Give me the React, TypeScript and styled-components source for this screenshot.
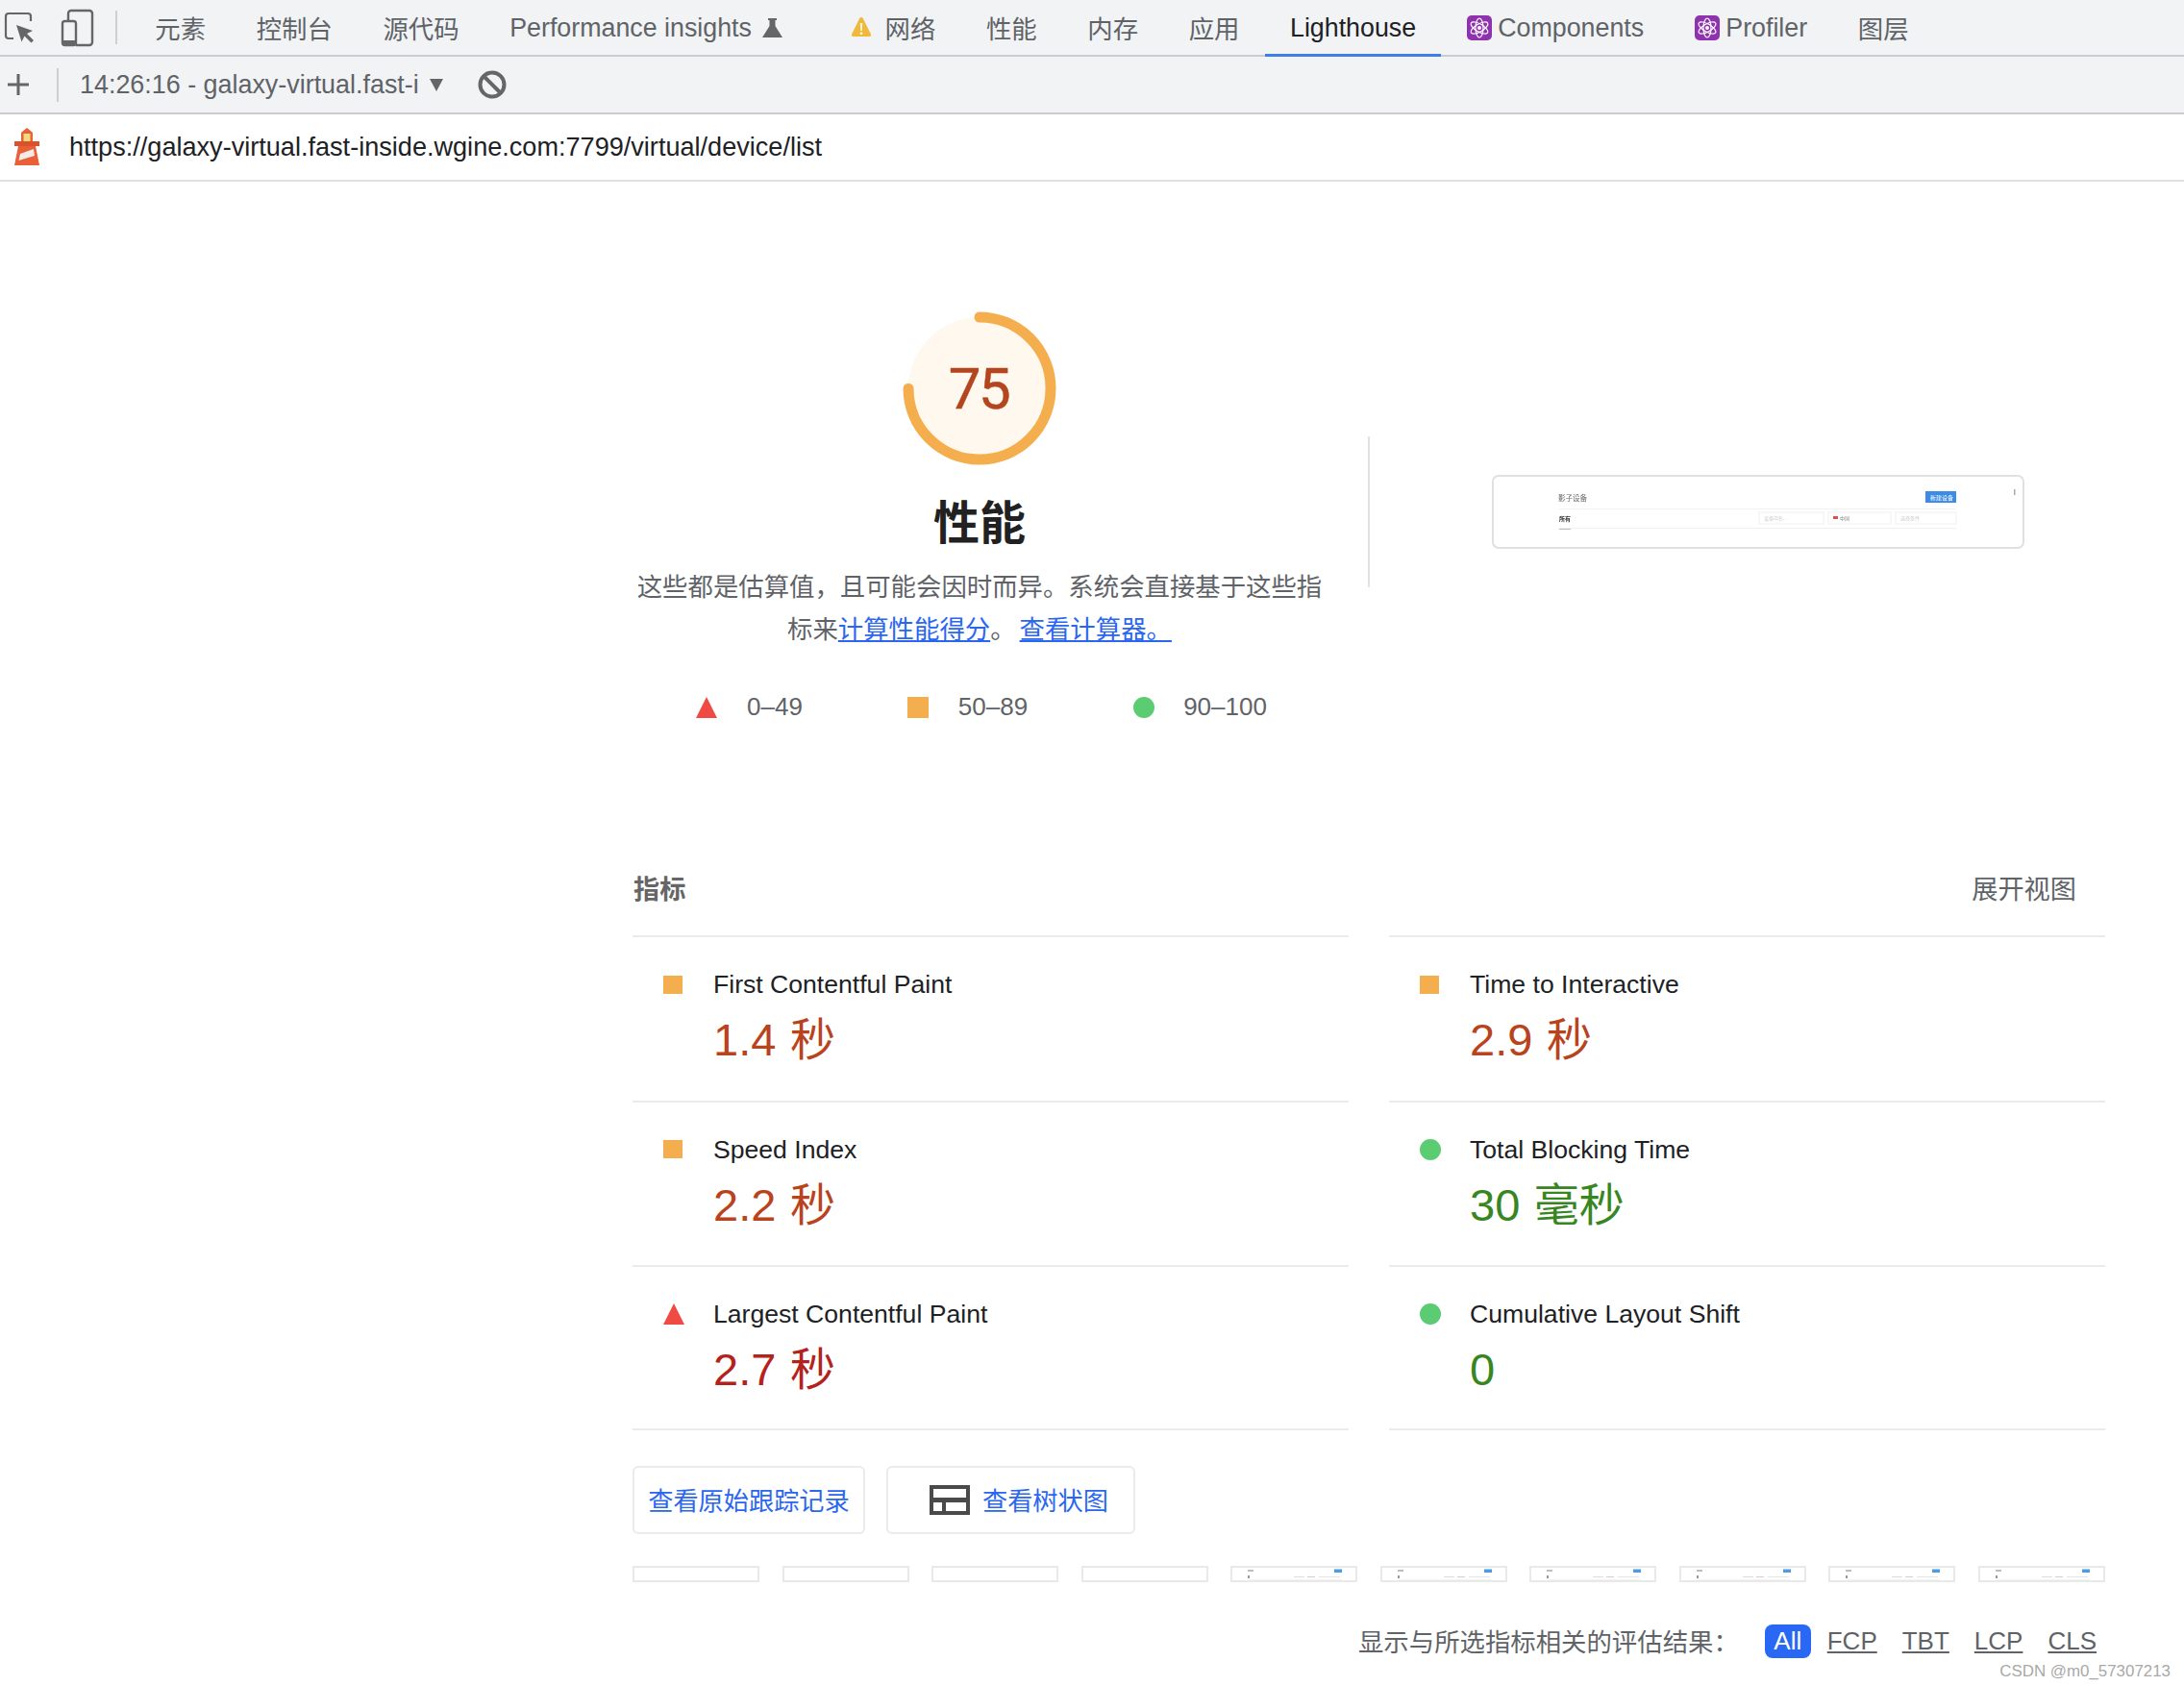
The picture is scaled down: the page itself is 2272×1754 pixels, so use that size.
import React from 'react';
import styled, { createGlobalStyle } from 'styled-components';

const GlobalStyle = createGlobalStyle`
  html, body {
    margin: 0;
    padding: 0;
    background: #fff;
  }
  body {
    font-family: "Liberation Sans", "Noto Sans CJK SC", sans-serif;
  }
`;

const Page = styled.div`
  position: relative;
  width: 2272px;
  height: 1754px;
  overflow: hidden;
  background: #fff;
`;

/* devtools chrome */
const TabBar = styled.div`
  display: flex;
  align-items: stretch;
  height: 57px;
  background: #f1f3f5;
  border-bottom: 2px solid #cbcbd0;
`;

const ToolIcons = styled.div`
  display: flex;
  align-items: center;
  gap: 22px;
  padding-left: 4px;
  margin-right: 13px;
`;

const VSep = styled.div<{ $h: number }>`
  width: 2px;
  height: ${p => p.$h}px;
  background: #cfcfd2;
`;

const Tab = styled.div<{ $active?: boolean; $latin?: boolean }>`
  display: flex;
  align-items: center;
  padding: ${p => (p.$latin ? '2px' : '0')} 26.3px 0;
  height: 59px;
  box-sizing: border-box;
  font-size: ${p => (p.$latin ? '26.8px' : '26.4px')};
  white-space: nowrap;
  color: ${p => (p.$active ? '#202124' : '#5f6368')};
  border-bottom: 3px solid ${p => (p.$active ? '#3f7de8' : 'transparent')};
`;

const FlaskIcon = styled.svg`
  margin-left: 11px;
  margin-right: 19px;
`;

const TabIcon = styled.svg`
  margin-right: 6.5px;
  flex: none;
`;

const WarnIcon = styled.svg`
  margin-right: 14px;
  margin-left: -1px;
  flex: none;
`;

const ReportBar = styled.div`
  display: flex;
  align-items: center;
  height: 58px;
  background: #f1f3f5;
  border-bottom: 2px solid #cbcbd0;
`;

const PlusIcon = styled.svg`
  margin-left: 8px;
  margin-right: 29px;
`;

const ReportName = styled.span`
  margin-left: 22px;
  font-size: 26.9px;
  color: #5f6368;
  white-space: nowrap;
`;

const Caret = styled.svg`
  margin-left: 11px;
  margin-right: 36px;
`;

const UrlBar = styled.div`
  display: flex;
  align-items: center;
  height: 68px;
  padding-left: 15px;
  border-bottom: 2px solid #e0e0e0;
`;

const UrlText = styled.span`
  margin-left: 31px;
  font-size: 27.1px;
  color: #202124;
  white-space: nowrap;
`;

/* score header */
const ScoreHeader = styled.div`
  display: flex;
  align-items: flex-start;
  height: 706px;
  padding-left: 657px;
`;

const ScoreColumn = styled.div`
  width: 724px;
  padding-top: 135px;
  display: flex;
  flex-direction: column;
  align-items: center;
`;

const Gauge = styled.div`
  display: grid;
  place-items: center;
  width: 160px;
  height: 160px;
  & > * {
    grid-area: 1 / 1;
  }
`;

const GaugeValue = styled.span`
  padding: 2px 2px 0 0;
  font-family: Roboto, "Liberation Sans", sans-serif;
  font-size: 60px;
  letter-spacing: -2.5px;
  line-height: 1;
  color: #b3451f;
  -webkit-text-stroke: 0.5px #b3451f;
`;

const CategoryTitle = styled.h1`
  margin: 33px 0 0;
  font-size: 48px;
  line-height: 56px;
  font-weight: 700;
  color: #212121;
`;

const Description = styled.p`
  margin: 16px 0 0;
  width: 724px;
  font-size: 26.4px;
  line-height: 44px;
  text-align: center;
  color: #5f6368;
`;

const DescriptionLine = styled.span`
  display: block;
  white-space: nowrap;
`;

const InlineLink = styled.a`
  color: #2a66ef;
  text-decoration: underline;
`;

const FullStop = styled.span`
  margin-right: 4px;
`;

const Legend = styled.div`
  display: flex;
  align-items: center;
  align-self: flex-start;
  margin: 43px 0 0 67px;
  font-size: 26px;
  color: #5f6368;
`;

const LegendItem = styled.div<{ $gap: number; $after?: number }>`
  display: flex;
  align-items: center;
  gap: ${p => p.$gap}px;
  margin-right: ${p => p.$after ?? 0}px;
`;

const SquareMark = styled.span<{ $size?: number }>`
  display: block;
  flex: none;
  width: ${p => p.$size ?? 22}px;
  height: ${p => (p.$size ? p.$size - 1 : 22)}px;
  background: #f4ae4e;
`;

const CircleMark = styled.span<{ $size?: number }>`
  display: block;
  flex: none;
  width: ${p => p.$size ?? 22}px;
  height: ${p => p.$size ?? 22}px;
  border-radius: 50%;
  background: #5bcc72;
`;

const TriangleMark = styled.span<{ $size?: number }>`
  display: block;
  flex: none;
  width: 0;
  height: 0;
  border-left: ${p => (p.$size ?? 22) / 2}px solid transparent;
  border-right: ${p => (p.$size ?? 22) / 2}px solid transparent;
  border-bottom: ${p => p.$size ?? 22}px solid #ef4a43;
`;

const HeaderRule = styled.div`
  flex: none;
  width: 2px;
  height: 157px;
  margin: 265px 0 0 42px;
  background: #e2e2e2;
`;

const Screenshot = styled.svg`
  flex: none;
  margin: 305px 0 0 127px;
  filter: blur(0.45px);
`;

/* metrics */
const Report = styled.div`
  padding: 0 82px 0 658px;
`;

const MetricsHead = styled.div`
  display: flex;
  justify-content: space-between;
  align-items: center;
  height: 78px;
  box-sizing: border-box;
  padding: 0 30px 22px 1px;
  font-size: 27.2px;
  color: #5f6368;
`;

const MetricsTitle = styled.span`
  font-weight: 700;
  color: #666;
`;

const MetricsGrid = styled.div`
  display: grid;
  grid-template-columns: 745px 745px;
  column-gap: 42px;
`;

const Metric = styled.div`
  display: grid;
  grid-template-columns: 84px 1fr;
  grid-template-rows: 46px auto;
  padding-top: 26px;
  height: 143.5px;
  border-top: 2px solid #ebebeb;
  &:nth-last-child(-n + 2) {
    height: 141.5px;
    border-bottom: 2px solid #ebebeb;
  }
`;

const MarkSlot = styled.div`
  display: flex;
  align-items: center;
  padding-left: 31.5px;
`;

const MetricLabel = styled.div`
  font-size: 26.6px;
  line-height: 46px;
  color: #202124;
`;

const MetricValue = styled.div<{ $tone: string }>`
  grid-column: 2;
  margin-top: 7px;
  font-size: 47px;
  line-height: 56px;
  word-spacing: 1.5px;
  color: ${p => p.$tone};
`;

const Buttons = styled.div`
  display: flex;
  gap: 22px;
  margin-top: 37px;
`;

const OutlineButton = styled.div<{ $w: number; $start?: number }>`
  display: flex;
  align-items: center;
  justify-content: ${p => (p.$start ? 'flex-start' : 'center')};
  gap: 13px;
  width: ${p => p.$w}px;
  height: 71px;
  box-sizing: border-box;
  padding-left: ${p => p.$start ?? 0}px;
  border: 2px solid #ebebeb;
  border-radius: 6px;
  font-size: 26.2px;
  color: #2a66ef;
`;

const Filmstrip = styled.div`
  display: grid;
  grid-template-columns: repeat(10, 132px);
  justify-content: space-between;
  margin-top: 33px;
`;

const Frame = styled.div`
  width: 132px;
  height: 17px;
  box-sizing: border-box;
  border: 2px solid #e9e9e9;
  overflow: hidden;
  svg {
    display: block;
  }
`;

const FilterRow = styled.div`
  display: flex;
  align-items: center;
  justify-content: flex-end;
  margin-top: 44px;
  height: 35px;
  padding-right: 9px;
  font-size: 26px;
  color: #5f6368;
`;

const FilterLabel = styled.span`
  margin-right: 27px;
  padding-bottom: 2px;
  font-size: 26.4px;
`;

const FilterChip = styled.span<{ $active?: boolean }>`
  display: flex;
  align-items: center;
  justify-content: center;
  height: 35px;
  padding: 0 ${p => (p.$active ? '9.5px' : '0')};
  margin-right: ${p => (p.$active ? '17px' : '26px')};
  border-radius: 8px;
  background: ${p => (p.$active ? '#2968f5' : 'transparent')};
  color: ${p => (p.$active ? '#fff' : '#5f6368')};
  text-decoration: ${p => (p.$active ? 'none' : 'underline')};
  &:last-child {
    margin-right: 0;
  }
`;

const Watermark = styled.div`
  position: absolute;
  right: 14px;
  bottom: 5px;
  font-size: 16.9px;
  color: #a9a9a9;
`;

const ReactIcon = () => (
  <TabIcon width="26" height="26" viewBox="0 0 26 26">
    <rect width="26" height="26" rx="5" fill="#8e33ad" />
    <g fill="none" stroke="#fff" strokeWidth="1.2">
      <ellipse cx="13" cy="13" rx="4" ry="10" />
      <ellipse cx="13" cy="13" rx="4" ry="10" transform="rotate(60 13 13)" />
      <ellipse cx="13" cy="13" rx="4" ry="10" transform="rotate(-60 13 13)" />
    </g>
    <circle cx="13" cy="13" r="2" fill="#fff" />
  </TabIcon>
);

const MiniPage = () => (
  <svg width="128" height="13" viewBox="0 0 128 13">
    <rect x="16" y="2" width="6" height="2" fill="#bdbdbd" />
    <rect x="106" y="1.5" width="8" height="3.5" fill="#4d9be0" />
    <rect x="16" y="8" width="2" height="3" fill="#999" />
    <rect x="18" y="12" width="96" height="1" fill="#f3f3f3" />
    <rect x="64" y="9" width="11" height="1" fill="#ddd" />
    <rect x="78" y="9" width="8" height="1" fill="#e2c8c8" />
    <rect x="90" y="9" width="22" height="1" fill="#e4e4e4" />
  </svg>
);

const DevicePreview = () => (
  <Screenshot width="554" height="77" viewBox="0 0 554 77">
    <rect x="1" y="1" width="552" height="75" rx="6" fill="#fff" stroke="#e0e0e0" strokeWidth="2" />
    <text x="69" y="27" fontSize="7.5" fill="#666">影子设备</text>
    <rect x="451" y="17" width="32" height="12" fill="#3c8ce6" />
    <text x="456" y="25.5" fontSize="6" fill="#fff">新建设备</text>
    <rect x="543" y="15" width="1.5" height="6" fill="#aaa" />
    <rect x="70" y="35" width="413" height="1" fill="#f1f1f1" />
    <text x="70" y="48" fontSize="6" fontWeight="700" fill="#333">所有</text>
    <rect x="278" y="39" width="67" height="12" fill="#fff" stroke="#f0f0f0" />
    <text x="283" y="47" fontSize="5" fill="#ccc">设备ID名...</text>
    <rect x="350" y="39" width="65" height="12" fill="#fff" stroke="#f0f0f0" />
    <rect x="355" y="43" width="5" height="3" fill="#d9534f" />
    <text x="362" y="47" fontSize="5" fill="#888">中国</text>
    <rect x="420" y="39" width="63" height="12" fill="#fff" stroke="#f0f0f0" />
    <text x="425" y="47" fontSize="5" fill="#ccc">选择条件</text>
    <rect x="70" y="55" width="413" height="1" fill="#f1f1f1" />
    <rect x="70" y="56" width="12" height="1" fill="#bbb" />
  </Screenshot>
);

const metrics = [
  { label: 'First Contentful Paint', value: '1.4 秒', mark: 'square', tone: '#b9431c' },
  { label: 'Time to Interactive', value: '2.9 秒', mark: 'square', tone: '#b9431c' },
  { label: 'Speed Index', value: '2.2 秒', mark: 'square', tone: '#b9431c' },
  { label: 'Total Blocking Time', value: '30 毫秒', mark: 'circle', tone: '#38861f' },
  { label: 'Largest Contentful Paint', value: '2.7 秒', mark: 'triangle', tone: '#b3231c' },
  { label: 'Cumulative Layout Shift', value: '0', mark: 'circle', tone: '#38861f' },
];

const Mark = ({ kind }: { kind: string }) => {
  if (kind === 'square') return <SquareMark $size={20} />;
  if (kind === 'circle') return <CircleMark $size={22} />;
  return <TriangleMark $size={22} />;
};

export default function App() {
  return (
    <Page>
      <GlobalStyle />
      <TabBar>
        <ToolIcons>
          <svg width="36" height="36" viewBox="0 0 36 36">
            <path d="M10 29H5a3 3 0 0 1-3-3V6a3 3 0 0 1 3-3h20a3 3 0 0 1 3 3v5" fill="none" stroke="#666" strokeWidth="2.2" />
            <path d="M13 15l17 6-6 3 7 7-2.5 2.5-7-7-3 6z" fill="#666" />
          </svg>
          <svg width="36" height="40" viewBox="0 0 36 40">
            <path d="M9 12V5a3 3 0 0 1 3-3h19a3 3 0 0 1 3 3v30a3 3 0 0 1-3 3H17" fill="none" stroke="#666" strokeWidth="2.4" />
            <rect x="3" y="13" width="14" height="25" rx="2.5" fill="#f1f3f5" stroke="#666" strokeWidth="2.4" />
            <rect x="3" y="33" width="14" height="5" fill="#666" />
          </svg>
          <VSep $h={35} />
        </ToolIcons>
        <Tab>元素</Tab>
        <Tab>控制台</Tab>
        <Tab>源代码</Tab>
        <Tab $latin>
          Performance insights
          <FlaskIcon width="21" height="20" viewBox="0 0 21 20">
            <path d="M6 0h9v2h-1.5v6L21 20H0L7.5 8V2H6z" fill="#666" />
          </FlaskIcon>
        </Tab>
        <Tab>
          <WarnIcon width="22" height="22" viewBox="0 0 22 22">
            <path d="M11 1c1 0 1.6.6 2 1.4l8 16.4c.6 1.3 0 2.2-1.4 2.2H2.4C1 21 .4 20.100 1 18.800l8-16.400C9.400 1.600 10 1 11 1z" fill="#f0b93a" />
            <path d="M9.800 7h2.400l-.4 8h-1.600zM9.800 16.500h2.400v2.500H9.800z" fill="#fdf6e0" />
          </WarnIcon>
          网络
        </Tab>
        <Tab>性能</Tab>
        <Tab>内存</Tab>
        <Tab>应用</Tab>
        <Tab $active $latin>Lighthouse</Tab>
        <Tab $latin>
          <ReactIcon />
          Components
        </Tab>
        <Tab $latin>
          <ReactIcon />
          Profiler
        </Tab>
        <Tab>图层</Tab>
      </TabBar>

      <ReportBar>
        <PlusIcon width="22" height="22" viewBox="0 0 22 22">
          <path d="M0 11h22M11 0v22" stroke="#666" strokeWidth="3" />
        </PlusIcon>
        <VSep $h={35} />
        <ReportName>14:26:16 - galaxy-virtual.fast-i</ReportName>
        <Caret width="14" height="13" viewBox="0 0 14 13">
          <path d="M0 0h14L7 13z" fill="#666" />
        </Caret>
        <svg width="30" height="30" viewBox="0 0 30 30">
          <circle cx="15" cy="15" r="12.500" fill="none" stroke="#666" strokeWidth="4" />
          <path d="M6.500 6.500l17 17" stroke="#666" strokeWidth="4" />
        </svg>
      </ReportBar>

      <UrlBar>
        <svg width="26" height="40" viewBox="0 0 26 40">
          <path d="M13 0l6 5v9H7V5z" fill="#e9603a" />
          <rect x="9.500" y="6" width="7" height="8" fill="#f2dc7c" />
          <rect x="0" y="14" width="26" height="5" fill="#d9522c" />
          <path d="M4 19h18l4 20H0z" fill="#e85f38" />
          <path d="M6 27l14-5 1 7-16.500 5z" fill="#f5ece8" />
        </svg>
        <UrlText>https://galaxy-virtual.fast-inside.wgine.com:7799/virtual/device/list</UrlText>
      </UrlBar>

      <ScoreHeader>
        <ScoreColumn>
          <Gauge>
            <svg width="160" height="160" viewBox="0 0 160 160">
              <circle cx="80" cy="80" r="74" fill="#fff8ef" />
              <circle
                cx="80"
                cy="80"
                r="74"
                fill="none"
                stroke="#f4ae4e"
                strokeWidth="11"
                strokeLinecap="round"
                strokeDasharray="348 465"
                transform="rotate(-90 80 80)"
              />
            </svg>
            <GaugeValue>75</GaugeValue>
          </Gauge>
          <CategoryTitle>性能</CategoryTitle>
          <Description>
            <DescriptionLine>这些都是估算值，且可能会因时而异。系统会直接基于这些指</DescriptionLine>
            <DescriptionLine>
              标来<InlineLink>计算性能得分</InlineLink>
              <FullStop>。</FullStop>
              <InlineLink>查看计算器。</InlineLink>
            </DescriptionLine>
          </Description>
          <Legend>
            <LegendItem $gap={31} $after={109}>
              <TriangleMark />
              <span>0–49</span>
            </LegendItem>
            <LegendItem $gap={31} $after={110}>
              <SquareMark />
              <span>50–89</span>
            </LegendItem>
            <LegendItem $gap={30}>
              <CircleMark />
              <span>90–100</span>
            </LegendItem>
          </Legend>
        </ScoreColumn>
        <HeaderRule />
        <DevicePreview />
      </ScoreHeader>

      <Report>
        <MetricsHead>
          <MetricsTitle>指标</MetricsTitle>
          <span>展开视图</span>
        </MetricsHead>
        <MetricsGrid>
          {metrics.map(m => (
            <Metric key={m.label}>
              <MarkSlot>
                <Mark kind={m.mark} />
              </MarkSlot>
              <MetricLabel>{m.label}</MetricLabel>
              <MetricValue $tone={m.tone}>{m.value}</MetricValue>
            </Metric>
          ))}
        </MetricsGrid>
        <Buttons>
          <OutlineButton $w={242}>查看原始跟踪记录</OutlineButton>
          <OutlineButton $w={259} $start={43}>
            <svg width="42" height="31" viewBox="0 0 42 31">
              <path
                fillRule="evenodd"
                d="M0 0h42v31H0zM4 4v9h34V4zM4 18v9h9v-9zM17 18v9h21v-9z"
                fill="#4a4a4a"
              />
            </svg>
            查看树状图
          </OutlineButton>
        </Buttons>
        <Filmstrip>
          {Array.from({ length: 10 }, (_, i) => (
            <Frame key={i}>{i > 3 && <MiniPage />}</Frame>
          ))}
        </Filmstrip>
        <FilterRow>
          <FilterLabel>显示与所选指标相关的评估结果：</FilterLabel>
          <FilterChip $active>All</FilterChip>
          <FilterChip>FCP</FilterChip>
          <FilterChip>TBT</FilterChip>
          <FilterChip>LCP</FilterChip>
          <FilterChip>CLS</FilterChip>
        </FilterRow>
      </Report>
      <Watermark>CSDN @m0_57307213</Watermark>
    </Page>
  );
}
